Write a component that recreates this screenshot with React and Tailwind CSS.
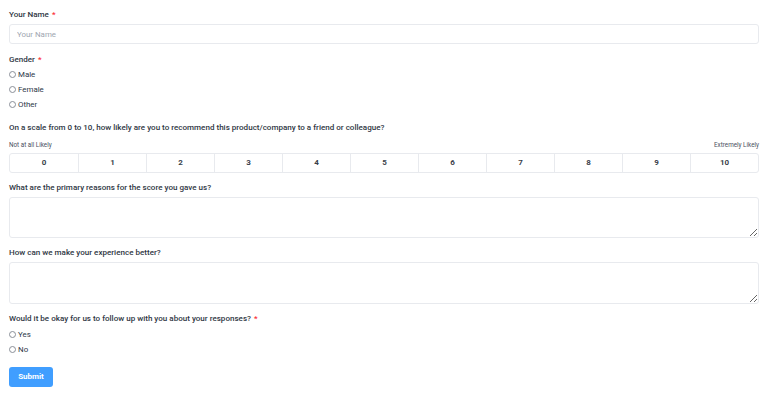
import React, { useState } from 'react';

const Req = () => <span className="text-red-500 ml-[3px]">*</span>;

const Label = ({ children, required, tight }) => (
    <div className={`h-[12px] leading-[12px] font-medium text-[8.05px] text-[#2f3744] ${tight || 'mb-[3px]'} ${tight === 1 ? 'mb-[1px]' : ''} ${tight === 2 ? 'mb-[2px]' : ''}`}>
        {children}
        {required && <Req />}
    </div>
);

const Radio = ({ name, label, checked, onChange }) => (
    <label className="flex items-center h-[15px] text-[7.9px] text-[#2d3748] cursor-pointer">
        <span className="w-[7px] h-[7px] rounded-full border border-[#8a8f98] bg-white mr-[2px] flex items-center justify-center">
            {checked && <span className="w-[3px] h-[3px] rounded-full bg-[#409eff]" />}
        </span>
        <input type="radio" name={name} className="hidden" checked={checked} onChange={onChange} />
        {label}
    </label>
);

const App = () => {
    const [gender, setGender] = useState(null);
    const [score, setScore] = useState(null);
    const [follow, setFollow] = useState(null);

    return (
        <div className="w-[768px] h-[404px] bg-white px-[9px] pt-[9px] leading-none" style={{ fontFamily: 'Roboto, "Liberation Sans", Arial, sans-serif' }}>
            <Label required>Your Name</Label>
            <input
                className="block w-full h-[20px] border border-[#e8eaee] rounded-[3px] px-[7px] text-[7.9px] text-[#2d3748] placeholder:text-[#a0a6b0] outline-none"
                placeholder="Your Name"
            />

            <div className="mt-[10px]">
                <Label required tight={1}>Gender</Label>
                {['Male', 'Female', 'Other'].map(g => (
                    <Radio key={g} name="gender" label={g} checked={gender === g} onChange={() => setGender(g)} />
                ))}
            </div>

            <div className="mt-[10px]">
                <Label>On a scale from 0 to 10, how likely are you to recommend this product/company to a friend or colleague?</Label>
                <div className="flex justify-between text-[6.3px] text-[#4a5060] h-[10px] leading-[10px] mt-[6px] mb-[3px]">
                    <span>Not at all Likely</span>
                    <span>Extremely Likely</span>
                </div>
                <div className="grid grid-cols-11 h-[20px] border border-[#e8eaee] rounded-[3px]">
                    {Array.from({ length: 11 }, (_, i) => (
                        <button
                            key={i}
                            onClick={() => setScore(i)}
                            className={`text-[8px] font-bold text-[#3a3f4a] ${i > 0 ? 'border-l border-[#e8eaee]' : ''} ${score === i ? 'bg-[#409eff] text-white' : ''}`}
                        >
                            {i}
                        </button>
                    ))}
                </div>
            </div>

            <div className="mt-[9px]">
                <Label>What are the primary reasons for the score you gave us?</Label>
                <textarea className="block w-full h-[41px] border border-[#e8eaee] rounded-[3px] outline-none text-[8px] p-[4px]" />
            </div>

            <div className="mt-[9px]">
                <Label>How can we make your experience better?</Label>
                <textarea className="block w-full h-[42px] border border-[#e8eaee] rounded-[3px] outline-none text-[8px] p-[4px]" />
            </div>

            <div className="mt-[9px]">
                <Label required tight={2}>Would it be okay for us to follow up with you about your responses?</Label>
                {['Yes', 'No'].map(o => (
                    <Radio key={o} name="follow" label={o} checked={follow === o} onChange={() => setFollow(o)} />
                ))}
            </div>

            <button className="block mt-[10px] w-[44px] h-[20px] rounded-[3px] bg-[#409eff] text-white text-[8px] font-bold">
                Submit
            </button>
        </div>
    );
};

export default App;
